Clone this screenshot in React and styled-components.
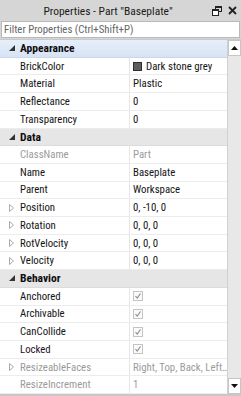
import React from "react";
import styled, { createGlobalStyle } from "styled-components";

const Global = createGlobalStyle`
  html, body { margin: 0; padding: 0; background: #d6d6d6; }
  * { box-sizing: border-box; }
`;

const FONT = `"Liberation Sans Narrow", "Roboto Condensed", Roboto, "Liberation Sans", sans-serif`;

const Panel = styled.div`
  width: 241px;
  height: 396px;
  display: flex;
  flex-direction: column;
  overflow: hidden;
  background: #d6d6d6;
  font-family: ${FONT};
  font-size: 10.8px;
  color: #141414;
`;

const TitleBar = styled.div`
  height: 21px;
  display: flex;
  align-items: center;
  padding-right: 4px;
`;

const Title = styled.div`
  flex: 1;
  text-align: center;
  font-size: 11.5px;
  color: #1a1a1a;
  padding-left: 4px;
`;

const TitleIcons = styled.div`
  display: flex;
  align-items: center;
  gap: 6px;
`;

const Filter = styled.div`
  height: 17px;
  margin: 0 1px;
  background: #fff;
  border: 1px solid #b9b9b9;
  display: flex;
  align-items: center;
  padding-left: 2px;
  color: #666;
  font-size: 10.8px;
`;

const Body = styled.div`
  margin-top: 1px;
  flex: 1;
  display: flex;
  background: #fff;
  border-top: 1px solid #c9c9c9;
  min-height: 0;
`;

const Grid = styled.div`
  flex: 1;
  display: flex;
  flex-direction: column;
  overflow: hidden;
`;

const Category = styled.div`
  height: 18px;
  display: flex;
  align-items: center;
  font-weight: bold;
  font-size: 11.5px;
  color: #0d0d0d;
  background: ${(p) =>
    p.$selected ? "linear-gradient(#e6eefa, #d7e3f4)" : "#e6e6e6"};
  border-bottom: 1px solid ${(p) => (p.$selected ? "#c9d8ee" : "#dcdcdc")};
`;

const Arrow = styled.span`
  width: 20px;
  display: flex;
  justify-content: center;
  padding-left: 3px;
  align-items: center;
  flex-shrink: 0;
`;

const Row = styled.div`
  height: 18px;
  display: grid;
  grid-template-columns: 130px 1fr;
  border-bottom: 1px solid #ececec;
`;

const NameCell = styled.div`
  display: flex;
  align-items: center;
  border-right: 1px solid #e6e6e6;
  color: ${(p) => (p.$dim ? "#9b9b9b" : p.$color || "#141414")};
  white-space: nowrap;
  overflow: hidden;
`;

const ValueCell = styled.div`
  display: flex;
  align-items: center;
  padding-left: 3px;
  gap: 4px;
  color: ${(p) => (p.$dim ? "#9b9b9b" : "#141414")};
  white-space: nowrap;
  overflow: hidden;
`;

const Swatch = styled.span`
  width: 9px;
  height: 9px;
  background: #5e5e5e;
  border: 1px solid #2e2e2e;
  flex-shrink: 0;
`;

const Check = styled.span`
  width: 10px;
  height: 10px;
  border: 1px solid #c4c4c4;
  background: #fafafa;
  display: flex;
  align-items: center;
  justify-content: center;
`;

const Scrollbar = styled.div`
  width: 14px;
  display: flex;
  flex-direction: column;
  background: #e8e8e8;
  border-left: 1px solid #d0d0d0;
`;

const ScrollBtn = styled.div`
  height: 16px;
  background: #fff;
  border: 1px solid #c6c6c6;
  display: flex;
  align-items: center;
  justify-content: center;
`;

const Track = styled.div`
  flex: 1;
`;

const BottomBar = styled.div`
  height: 2px;
  background: #c8c8c8;
`;

const ExpandedIcon = () => (
  <svg width="6" height="6" viewBox="0 0 6 6">
    <polygon points="6,0 6,6 0,6" fill="#333" />
  </svg>
);

const CollapsedIcon = () => (
  <svg width="5" height="8" viewBox="0 0 5 8">
    <polygon points="0.5,0.5 4.5,4 0.5,7.5" fill="none" stroke="#aaa" strokeWidth="1" />
  </svg>
);

const CheckMark = () => (
  <svg width="8" height="8" viewBox="0 0 8 8">
    <polyline points="1.5,4 3.2,6 6.5,1.5" fill="none" stroke="#8a8a8a" strokeWidth="1.1" />
  </svg>
);

const FloatIcon = () => (
  <svg width="10" height="10" viewBox="0 0 10 10">
    <rect x="3.5" y="0.5" width="6" height="5" fill="none" stroke="#222" strokeWidth="1" />
    <rect x="3" y="0" width="7" height="2" fill="#222" />
    <rect x="0.5" y="3.5" width="6" height="6" fill="#fff" stroke="#222" strokeWidth="1" />
    <rect x="0" y="3" width="7" height="2" fill="#222" />
  </svg>
);

const CloseIcon = () => (
  <svg width="9" height="9" viewBox="0 0 9 9">
    <path d="M1 1 L8 8 M8 1 L1 8" stroke="#222" strokeWidth="1.8" />
  </svg>
);

const UpArrow = () => (
  <svg width="7" height="4" viewBox="0 0 7 4">
    <polygon points="0,4 7,4 3.5,0" fill="#111" />
  </svg>
);

const DownArrow = () => (
  <svg width="7" height="4" viewBox="0 0 7 4">
    <polygon points="0,0 7,0 3.5,4" fill="#111" />
  </svg>
);

const sections = [
  {
    title: "Appearance",
    selected: true,
    rows: [
      { name: "BrickColor", value: "Dark stone grey", swatch: true },
      { name: "Material", value: "Plastic" },
      { name: "Reflectance", value: "0" },
      { name: "Transparency", value: "0" },
    ],
  },
  {
    title: "Data",
    rows: [
      { name: "ClassName", value: "Part", dim: true },
      { name: "Name", value: "Baseplate" },
      { name: "Parent", value: "Workspace" },
      { name: "Position", value: "0, -10, 0", expand: true },
      { name: "Rotation", value: "0, 0, 0", expand: true },
      { name: "RotVelocity", value: "0, 0, 0", expand: true },
      { name: "Velocity", value: "0, 0, 0", expand: true },
    ],
  },
  {
    title: "Behavior",
    rows: [
      { name: "Anchored", check: true },
      { name: "Archivable", check: true },
      { name: "CanCollide", check: true },
      { name: "Locked", check: true, color: "#2a1228" },
      { name: "ResizeableFaces", value: "Right, Top, Back, Left…", dim: true, expand: true },
      { name: "ResizeIncrement", value: "1", dim: true },
    ],
  },
];

export default function App() {
  return (
    <>
      <Global />
      <Panel>
        <TitleBar>
          <Title>Properties - Part "Baseplate"</Title>
          <TitleIcons>
            <FloatIcon />
            <CloseIcon />
          </TitleIcons>
        </TitleBar>
        <Filter>Filter Properties (Ctrl+Shift+P)</Filter>
        <Body>
          <Grid>
            {sections.map((s) => (
              <React.Fragment key={s.title}>
                <Category $selected={s.selected}>
                  <Arrow>
                    <ExpandedIcon />
                  </Arrow>
                  {s.title}
                </Category>
                {s.rows.map((r) => (
                  <Row key={r.name}>
                    <NameCell $dim={r.dim} $color={r.color}>
                      <Arrow>{r.expand ? <CollapsedIcon /> : null}</Arrow>
                      {r.name}
                    </NameCell>
                    <ValueCell $dim={r.dim}>
                      {r.swatch && <Swatch />}
                      {r.check ? (
                        <Check>
                          <CheckMark />
                        </Check>
                      ) : (
                        r.value
                      )}
                    </ValueCell>
                  </Row>
                ))}
              </React.Fragment>
            ))}
          </Grid>
          <Scrollbar>
            <ScrollBtn>
              <UpArrow />
            </ScrollBtn>
            <Track />
            <ScrollBtn>
              <DownArrow />
            </ScrollBtn>
          </Scrollbar>
        </Body>
        <BottomBar />
      </Panel>
    </>
  );
}
